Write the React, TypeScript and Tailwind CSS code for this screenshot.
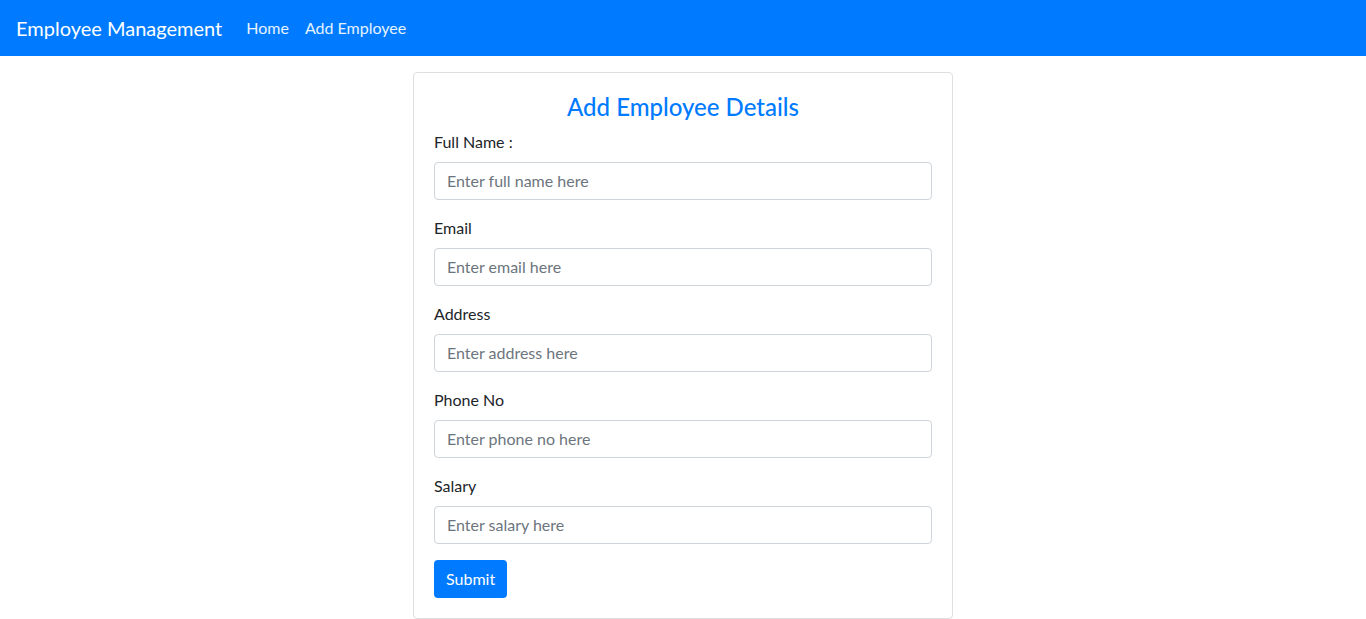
import React from "react";

const fields = [
  { label: "Full Name :", ph: "Enter full name here" },
  { label: "Email", ph: "Enter email here" },
  { label: "Address", ph: "Enter address here" },
  { label: "Phone No", ph: "Enter phone no here" },
  { label: "Salary", ph: "Enter salary here" },
];

export default function App() {
  return (
    <div className="min-h-screen bg-white text-[#212529]" style={{ fontFamily: 'Lato, "Noto Sans", sans-serif' }}>
      <nav className="flex h-[56px] items-center bg-[#007bff] px-4">
        <a className="mr-4 py-[5px] text-[20px] leading-[30px] text-white">Employee Management</a>
        <a className="px-2 py-2 text-[16px] leading-6 text-white/90">Home</a>
        <a className="px-2 py-2 text-[16px] leading-6 text-white/90">Add Employee</a>
      </nav>
      <div className="mx-auto mt-4 w-[540px] rounded border border-[#dfdfdf] p-5">
        <h4 className="mb-2 text-center text-[24px] font-medium leading-[1.2] text-[#007bff]">Add Employee Details</h4>
        {fields.map((f) => (
          <div key={f.label} className="mb-4">
            <label className="mb-2 block text-[16px] leading-6">{f.label}</label>
            <input
              placeholder={f.ph}
              className="block h-[38px] w-full rounded border border-[#ced4da] px-3 text-[16px] leading-6 text-[#495057] outline-none placeholder:text-[#6c757d]"
            />
          </div>
        ))}
        <button className="h-[38px] rounded bg-[#007bff] px-3 text-[16px] leading-6 text-white">Submit</button>
      </div>
    </div>
  );
}
